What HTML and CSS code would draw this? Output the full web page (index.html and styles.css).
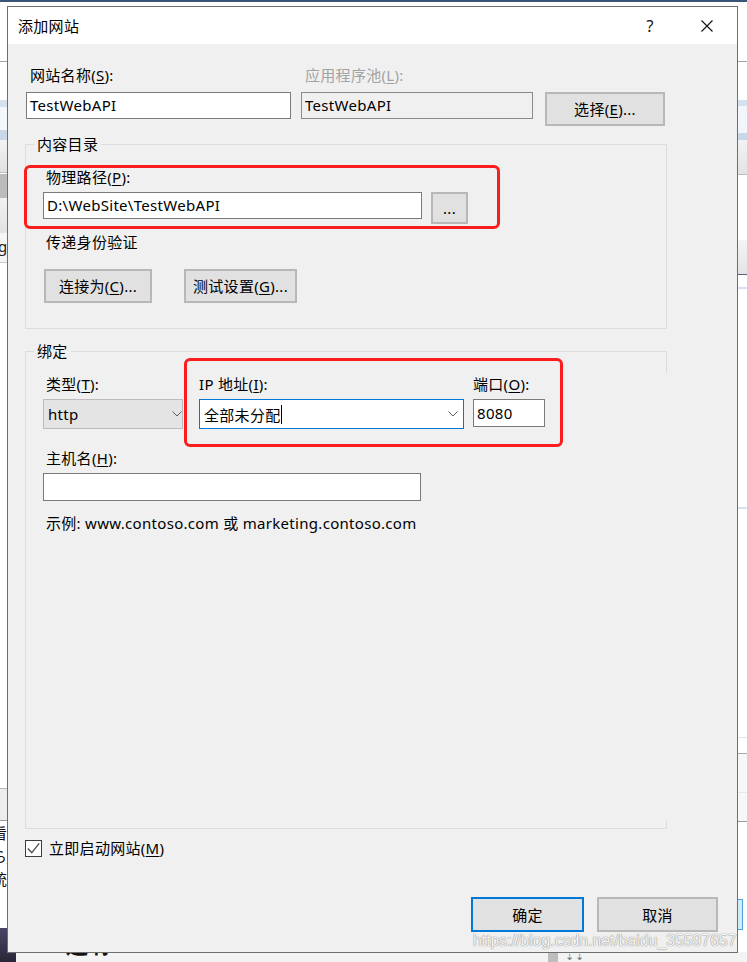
FILE: index.html
```html
<!DOCTYPE html>
<html lang="zh-CN">
<head>
<meta charset="utf-8">
<title>添加网站</title>
<link rel="stylesheet" href="styles.css">
</head>
<body>
<div class="desk">
  <div class="bg-top"></div>

  <div class="lb lb1"></div>
  <div class="lb lb2"></div>
  <div class="lb lb3"></div>
  <div class="lb lb4"></div>
  <div class="lb lb5"></div>
  <div class="lb lb6"></div>
  <div class="lb lb7"></div>
  <div class="lb lb8"><span class="lb-g">g</span></div>
  <div class="lb lb9"></div>
  <div class="lb-clip">
    <div class="lb-txt">看</div>
    <div class="lb-txt">ら_</div>
    <div class="lb-txt">统</div>
  </div>
  <div class="lb-img"></div>

  <div class="rb rb1"></div>
  <div class="rb rb2"></div>
  <div class="rb rb3"></div>
  <div class="rb rb4"></div>
  <div class="rb rb5"></div>
  <div class="rb rb6"></div>
  <div class="rb rb7"></div>
  <div class="rb rb8"></div>
  <div class="rb rb9"></div>
  <div class="rb rb10"></div>
  <div class="rb rb11"></div>

  <div class="bottom-strip">
    <span class="bs-text">迷你</span>
    <span class="bs-square"></span>
    <span class="bs-arrows">⇣⇣</span>
  </div>

  <div class="dialog">
    <div class="titlebar">
      <span class="title">添加网站</span>
      <span class="help">?</span>
      <svg class="close" width="12" height="12" viewBox="0 0 12 12"><path d="M0.5 0.5 L11.5 11.5 M11.5 0.5 L0.5 11.5" stroke="#111" stroke-width="1.1" fill="none"/></svg>
    </div>

    <div class="body">
      <div class="row-top">
        <div class="field f-name">
          <div class="label">网站名称(<u>S</u>):</div>
          <div class="input">TestWebAPI</div>
        </div>
        <div class="field f-pool">
          <div class="label disabled">应用程序池(<u>L</u>):</div>
          <div class="input readonly">TestWebAPI</div>
        </div>
        <div class="field f-choose">
          <div class="btn btn-choose">选择(<u>E</u>)...</div>
        </div>
      </div>

      <div class="group g1">
        <div class="group-title">内容目录</div>
        <div class="label">物理路径(<u>P</u>):</div>
        <div class="path-row">
          <div class="input input-path">D:\WebSite\TestWebAPI</div>
          <div class="btn btn-dots">...</div>
        </div>
        <div class="label lbl-auth">传递身份验证</div>
        <div class="auth-btns">
          <div class="btn btn-conn">连接为(<u>C</u>)...</div>
          <div class="btn btn-test">测试设置(<u>G</u>)...</div>
        </div>
      </div>

      <div class="group g2">
        <div class="group-title">绑定</div>
        <div class="bind-row">
          <div class="field f-type">
            <div class="label">类型(<u>T</u>):</div>
            <div class="select">
              <span>http</span>
              <svg class="chev chev-sel" width="10" height="6" viewBox="0 0 10 6"><path d="M0.5 0.5 L5 5 L9.5 0.5" stroke="#5c5c5c" stroke-width="1" fill="none"/></svg>
            </div>
          </div>
          <div class="field f-ip">
            <div class="label plain">IP 地址(<u>I</u>):</div>
            <div class="combo">
              <span>全部未分配</span><span class="caret"></span>
              <svg class="chev chev-ip" width="10" height="6" viewBox="0 0 10 6"><path d="M0.5 0.5 L5 5 L9.5 0.5" stroke="#5c5c5c" stroke-width="1" fill="none"/></svg>
            </div>
          </div>
          <div class="field f-port">
            <div class="label plain">端口(<u>O</u>):</div>
            <div class="input input-port">8080</div>
          </div>
        </div>
        <div class="label lbl-host">主机名(<u>H</u>):</div>
        <div class="input input-host"></div>
        <div class="label lbl-example">示例: www.contoso.com 或 marketing.contoso.com</div>
      </div>

      <div class="check-row">
        <span class="checkbox">
          <svg width="15" height="15" viewBox="0 0 15 15"><path d="M1.8 7.4 L5.8 11.6 L13.2 2.4" stroke="#555" stroke-width="1.4" fill="none"/></svg>
        </span>
        <span class="check-label">立即启动网站(<u>M</u>)</span>
      </div>

      <div class="button-row">
        <div class="btn btn-ok">确定</div>
        <div class="btn btn-cancel">取消</div>
      </div>
    </div>

    <div class="redbox red1"></div>
    <div class="redbox red2"></div>
    <div class="watermark">https://blog.csdn.net/baidu_35597657</div>
  </div>
</div>
</body>
</html>
```

FILE: styles.css
```css
* { box-sizing: border-box; }

body {
  margin: 0;
  background: #ffffff;
  font-family: "Noto Sans", "Noto Sans CJK SC", sans-serif;
  font-size: 15px;
  letter-spacing: 0.3px;
  color: #000;
}

u { text-decoration-thickness: 1px; text-underline-offset: 2px; }

.desk {
  position: relative;
  width: 747px;
  height: 962px;
  overflow: hidden;
  background: #ffffff;
}

/* ---------- background application behind the dialog ---------- */
.bg-top { position: absolute; left: 0; top: 0; width: 747px; height: 2px; background: #3a5576; }

.lb { position: absolute; left: 0; width: 8px; }
.lb1 { top: 61px; height: 1px; background: #a2a2a2; }
.lb2 { top: 100px; height: 7px; background: #d6e1ee; }
.lb3 { top: 107px; height: 23px; background: #f3f6fa; }
.lb4 { top: 130px; height: 10px; background: #c9d7e6; }
.lb5 { top: 140px; height: 33px; background: linear-gradient(#f3f3f3, #e1e1e1); border-bottom: 1px solid #bdbdbd; }
.lb6 { top: 174px; height: 24px; background: #bcbcbc; }
.lb7 { top: 198px; height: 35px; background: linear-gradient(#f1f1f1, #e2e2e2); }
.lb8 { top: 233px; height: 30px; background: #f5f5f5; border-bottom: 1px solid #c8c8c8; overflow: hidden; }
.lb-g { position: absolute; left: -2px; top: 3px; font-size: 15px; line-height: 20px; color: #222; }
.lb9 { top: 788px; height: 33px; background: #ededed; border-top: 1px solid #b5b5b5; border-bottom: 1px solid #9a9a9a; }
.lb-clip {
  position: absolute;
  left: 0;
  top: 823px;
  width: 8px;
  height: 70px;
  overflow: hidden;
  display: flex;
  flex-direction: column;
  gap: 3px;
}
.lb-txt { margin-left: -8px; width: 16px; font-size: 15px; line-height: 20px; color: #111; white-space: nowrap; letter-spacing: 0; }
.lb-img { position: absolute; left: 0; top: 928px; width: 16px; height: 34px; background: linear-gradient(#4b4566, #2a2638); }

.rb { position: absolute; left: 738px; width: 9px; }
.rb1 { top: 61px; height: 1px; background: #a2a2a2; }
.rb2 { top: 100px; height: 6px; background: #d6e1ee; }
.rb3 { top: 106px; height: 27px; background: #f2f5f9; }
.rb4 { top: 133px; height: 7px; background: #c9d7e6; }
.rb5 { top: 140px; height: 35px; background: linear-gradient(#f3f3f3, #e3e3e3); border-bottom: 1px solid #bdbdbd; }
.rb6 { top: 240px; height: 35px; background: linear-gradient(#f5f5f5, #e4e4e4); border-bottom: 1px solid #5e5e7a; }
.rb7 { top: 287px; height: 2px; background: #d7e1ef; }
.rb8 { top: 507px; height: 2px; background: #d7e1ef; }
.rb9 { top: 737px; height: 1px; background: #e4e4e4; }
.rb10 { top: 753px; height: 69px; background: linear-gradient(#f7f7f7 0 38px, #e8e8e8 38px 39px, #f7f7f7 39px); border-top: 1px solid #ababab; border-bottom: 1px solid #9a9a9a; }
.rb11 { top: 899px; height: 31px; width: 5px; background: #d4ebf8; border: 1px solid #4ba3de; border-left: none; }

.bottom-strip {
  position: absolute;
  left: 16px;
  top: 952px;
  width: 731px;
  height: 10px;
  background: #f3f3f3;
  overflow: hidden;
}
.bs-text { position: absolute; left: 50px; top: -21px; font-size: 22px; font-weight: 700; line-height: 26px; color: #111; letter-spacing: 4px; }
.bs-square { position: absolute; left: 532px; top: 1px; width: 10px; height: 9px; background: #bdbdbd; }
.bs-arrows { position: absolute; left: 549px; top: -3px; font-size: 11px; line-height: 14px; color: #777; letter-spacing: 1px; }

/* ---------- dialog window ---------- */
.dialog {
  position: absolute;
  left: 7px;
  top: 6px;
  width: 731px;
  height: 947px;
  border: 1px solid #6e6e6e;
  background: #f0f0f0;
  display: flex;
  flex-direction: column;
}

.titlebar {
  flex: none;
  height: 37px;
  background: #ffffff;
  display: flex;
  align-items: center;
  padding-left: 10px;
}
.title { line-height: 20px; }
.help {
  margin-left: auto;
  width: 20px;
  text-align: center;
  font-family: "Noto Sans", sans-serif;
  font-size: 16px;
  line-height: 20px;
  color: #111;
}
.close { display: block; margin-left: 41px; margin-right: 24px; }

.body {
  flex: 1;
  display: flex;
  flex-direction: column;
  padding-left: 17px;
}

.field { display: flex; flex-direction: column; }
.label { height: 20px; line-height: 20px; padding-left: 3px; white-space: nowrap; }
.label.plain { padding-left: 0; }
.label.disabled { color: #a2a2a2; }

.input {
  height: 27px;
  border: 1px solid #7a7a7a;
  background: #ffffff;
  padding-left: 3px;
  line-height: 25px;
  white-space: nowrap;
  overflow: hidden;
}
.input.readonly { background: #f0f0f0; border-color: #8a8a8a; }

.btn {
  display: flex;
  align-items: center;
  justify-content: center;
  background: #e1e1e1;
  border: 2px solid #b8b8b8;
  white-space: nowrap;
  line-height: 20px;
}

.row-top { display: flex; margin-top: 21px; margin-left: 1px; }
.row-top .label { margin-bottom: 7px; padding-left: 4px; }
.f-name { width: 265px; }
.f-pool { width: 232px; margin-left: 10px; }
.f-choose { margin-left: 12px; padding-top: 27px; }
.btn-choose { width: 120px; height: 34px; }

.group {
  position: relative;
  width: 642px;
  border: 1px solid #dcdcdc;
  padding: 22px 0 25px 17px;
}
.group-title {
  position: absolute;
  left: 8px;
  top: -11px;
  padding: 0 3px;
  line-height: 20px;
  background: #f0f0f0;
}
.g1 { margin-top: 18px; }
.path-row { display: flex; align-items: flex-start; margin-top: 5px; }
.input-path { width: 379px; }
.btn-dots { width: 37px; height: 32px; margin-left: 9px; }
.lbl-auth { margin-top: 8px; }
.auth-btns { display: flex; gap: 32px; margin-top: 17px; margin-left: 1px; }
.btn-conn { width: 108px; height: 34px; }
.btn-test { width: 113px; height: 34px; }

.g2 {
  margin-top: 22px;
  height: 478px;
  padding-bottom: 0;
  border-right-color: transparent;
}
.g2::before,
.g2::after {
  content: "";
  position: absolute;
  right: -1px;
  width: 1px;
  background: #dcdcdc;
}
.g2::before { top: -1px; height: 22px; }
.g2::after { bottom: -1px; height: 9px; }

.bind-row { display: flex; }
.bind-row .label { margin-bottom: 5px; }
.f-type { width: 140px; }
.f-ip { width: 265px; margin-left: 16px; }
.f-port { width: 72px; margin-left: 9px; }

.select {
  height: 30px;
  border: 1px solid #bcbcbc;
  background: #e4e4e4;
  display: flex;
  align-items: center;
  padding-left: 4px;
}
.combo {
  height: 30px;
  border: 1px solid #0078d7;
  background: #ffffff;
  display: flex;
  align-items: center;
  padding-left: 4px;
}
.chev { display: block; margin-left: auto; }
.chev-sel { margin-right: 0; }
.chev-ip { margin-right: 5px; }
.caret { display: block; width: 1px; height: 19px; background: #000; }
.input-port { height: 28px; line-height: 26px; }

.lbl-host { margin-top: 19px; }
.input-host { width: 378px; height: 28px; margin-top: 5px; }
.lbl-example { margin-top: 12px; }

.check-row {
  display: flex;
  align-items: center;
  height: 17px;
  margin-top: 11px;
}
.checkbox {
  display: block;
  width: 17px;
  height: 17px;
  border: 1px solid #3c3c3c;
  background: #ffffff;
}
.checkbox svg { display: block; }
.check-label { margin-left: 7px; line-height: 17px; }

.button-row {
  display: flex;
  justify-content: flex-end;
  gap: 13px;
  margin-top: auto;
  margin-bottom: 20px;
  padding-right: 19px;
}
.btn-ok { width: 113px; height: 35px; border-color: #0078d7; }
.btn-cancel { width: 121px; height: 35px; }

/* ---------- annotations over the dialog ---------- */
.redbox {
  position: absolute;
  border: 3px solid #fb1d1d;
  border-radius: 6px;
}
.red1 { left: 16px; top: 158px; width: 476px; height: 64px; }
.red2 { left: 176px; top: 351px; width: 379px; height: 89px; }

.watermark {
  position: absolute;
  left: 465px;
  top: 925px;
  font-family: "Liberation Sans", Arial, sans-serif;
  font-size: 15.8px;
  line-height: 18px;
  letter-spacing: 0;
  color: #f4f4f4;
  text-shadow: 0 0 1px #8c8c8c, 0 0 1px #8c8c8c;
  white-space: nowrap;
}
```
